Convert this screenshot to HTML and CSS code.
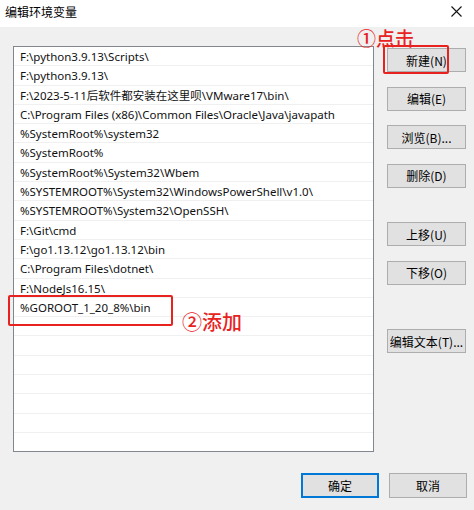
FILE: index.html
```html
<!DOCTYPE html>
<html lang="zh-CN">
<head>
<meta charset="utf-8">
<title>编辑环境变量</title>
<link rel="stylesheet" href="styles.css">
</head>
<body>
<div class="window">
  <div class="titlebar">
    <span class="title">编辑环境变量</span>
    <span class="close">
      <svg width="11" height="11" viewBox="0 0 11 11"><path d="M0.5 0.5 L10.5 10.5 M10.5 0.5 L0.5 10.5" stroke="#111" stroke-width="1.1" fill="none"/></svg>
    </span>
  </div>
  <div class="content">
    <div class="main">
      <div class="list">
        <div class="row">F:\python3.9.13\Scripts\</div>
        <div class="row">F:\python3.9.13\</div>
        <div class="row">F:\2023-5-11后软件都安装在这里呗\VMware17\bin\</div>
        <div class="row">C:\Program Files (x86)\Common Files\Oracle\Java\javapath</div>
        <div class="row">%SystemRoot%\system32</div>
        <div class="row">%SystemRoot%</div>
        <div class="row">%SystemRoot%\System32\Wbem</div>
        <div class="row">%SYSTEMROOT%\System32\WindowsPowerShell\v1.0\</div>
        <div class="row">%SYSTEMROOT%\System32\OpenSSH\</div>
        <div class="row">F:\Git\cmd</div>
        <div class="row">F:\go1.13.12\go1.13.12\bin</div>
        <div class="row">C:\Program Files\dotnet\</div>
        <div class="row">F:\NodeJs16.15\</div>
        <div class="row">%GOROOT_1_20_8%\bin</div>
        <div class="row"></div>
        <div class="row"></div>
        <div class="row"></div>
        <div class="row"></div>
        <div class="row"></div>
        <div class="row"></div>
      </div>
      <div class="side">
        <button class="btn">新建(N)</button>
        <button class="btn">编辑(E)</button>
        <button class="btn">浏览(B)...</button>
        <button class="btn">删除(D)</button>
        <button class="btn gap-md">上移(U)</button>
        <button class="btn">下移(O)</button>
        <button class="btn gap-lg">编辑文本(T)...</button>
      </div>
    </div>
    <div class="footer">
      <button class="btn foot default">确定</button>
      <button class="btn foot">取消</button>
    </div>
  </div>
  <div class="mark mark-new"></div>
  <div class="note note-new">①点击</div>
  <div class="mark mark-row"></div>
  <div class="note note-row">②添加</div>
</div>
</body>
</html>
```

FILE: styles.css
```css
html, body {
  margin: 0;
  padding: 0;
}
body {
  width: 474px;
  height: 510px;
  overflow: hidden;
  font-family: "Segoe UI", "Noto Sans", "Noto Sans CJK SC", sans-serif;
  font-size: 12px;
  color: #000;
}
.window {
  position: relative;
  width: 474px;
  height: 510px;
  background: #f0f0f0;
}
.titlebar {
  height: 27px;
  background: #fff;
  display: flex;
  align-items: center;
  justify-content: space-between;
  padding: 0 12px 0 5px;
}
.title {
  font-family: "Noto Sans CJK SC", sans-serif;
  font-size: 12px;
  color: #000;
  margin-top: -4px;
}
.close {
  display: flex;
  margin-top: -4px;
}
.content {
  padding: 19px 7px 0 13px;
}
.main {
  display: flex;
  gap: 13px;
}
.list {
  width: 359px;
  height: 404px;
  background: #fff;
  border: 1px solid #82878f;
  display: flex;
  flex-direction: column;
}
.row {
  height: 19.3px;
  flex: none;
  box-sizing: border-box;
  border-bottom: 1px solid #f0f0f0;
  padding-left: 6px;
  line-height: 19px;
  white-space: nowrap;
  overflow: hidden;
  font-family: "Noto Sans", "Noto Sans CJK SC", sans-serif;
  font-size: 11.5px;
  color: #111;
}
.side {
  display: flex;
  flex-direction: column;
  gap: 14.5px;
  padding-top: 2px;
}
.btn {
  width: 79px;
  height: 24px;
  margin: 0;
  padding: 0;
  background: #e1e1e1;
  border: 1px solid #adadad;
  font-family: "Noto Sans CJK SC", sans-serif;
  font-size: 12px;
  color: #000;
}
.gap-md { margin-top: 20px; }
.gap-lg { margin-top: 30px; }
.footer {
  display: flex;
  justify-content: flex-end;
  gap: 10px;
  padding-top: 21px;
  padding-right: 0;
}
.foot {
  width: 78px;
  height: 25px;
}
.default {
  border: 2px solid #0078d7;
}
.mark {
  position: absolute;
  border: 2px solid #e8231f;
  border-radius: 2px;
  box-sizing: border-box;
}
.mark-new {
  left: 383px;
  top: 45px;
  width: 66px;
  height: 29px;
}
.mark-row {
  left: 8px;
  top: 295px;
  width: 165px;
  height: 31px;
}
.note {
  position: absolute;
  color: #e8231f;
  font-family: "Noto Sans CJK SC", sans-serif;
  font-weight: 500;
  line-height: 22px;
}
.note-new {
  left: 357px;
  top: 27px;
  font-size: 19px;
}
.note-row {
  left: 182px;
  top: 311px;
  font-size: 20px;
}
```
